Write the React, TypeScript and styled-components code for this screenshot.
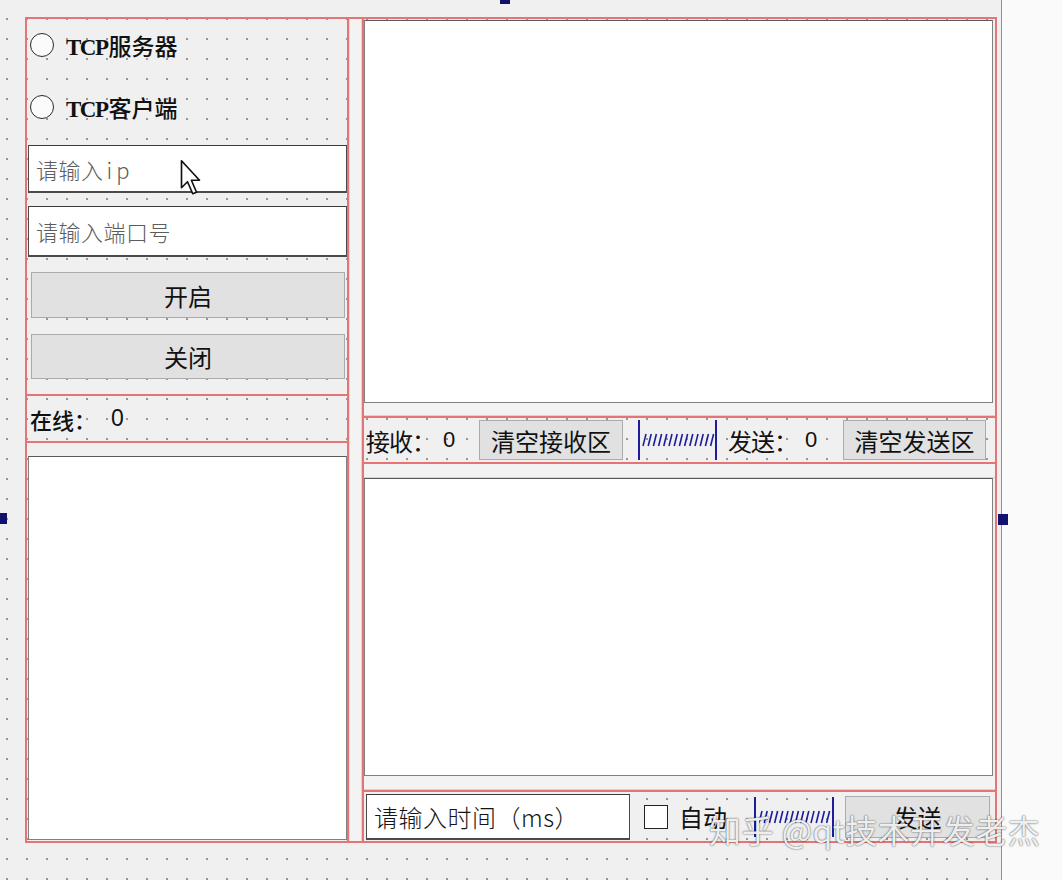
import React from 'react';
import styled, { createGlobalStyle } from 'styled-components';

const cjk = `"Noto Sans CJK SC", "Noto Sans", sans-serif`;
const layoutRed = '#e67474';

const GlobalStyle = createGlobalStyle`
    html, body {
        margin: 0;
        padding: 0;
        width: 1062px;
        height: 880px;
        overflow: hidden;
        background: #fafafa;
        font-family: ${cjk};
    }
`;

const Page = styled.div({
    display: 'flex',
    width: '1062px',
    height: '880px',
    position: 'relative'
});

// the designer form, with its dotted grid
const Form = styled.div({
    width: '1002px',
    height: '880px',
    boxSizing: 'border-box',
    padding: '17px 0 0 25px',
    backgroundColor: '#f0f0f0',
    backgroundImage: 'radial-gradient(circle at center, #979797 0 0.8px, transparent 1.3px)',
    backgroundSize: '20px 20px',
    backgroundPosition: '-3px 9px',
    borderRight: '1px solid #8a90a0'
});

const Outside = styled.div({
    flex: '1',
    background: '#fafafa'
});

const MainFrame = styled.div({
    display: 'flex',
    width: '972px',
    height: '826px',
    boxSizing: 'border-box',
    border: `2px solid ${layoutRed}`
});

const LeftPanel = styled.div({
    width: '322px',
    boxSizing: 'border-box',
    borderRight: `2px solid ${layoutRed}`,
    display: 'flex',
    flexDirection: 'column',
    paddingLeft: '1px'
});

const SplitHandle = styled.div({
    width: '13px',
    boxSizing: 'border-box',
    background: '#f3f3f3',
    borderLeft: '1px solid #dcdcdc',
    borderRight: '1px solid #d8d8d8'
});

const RightPanel = styled.div({
    flex: '1',
    boxSizing: 'border-box',
    borderLeft: `2px solid ${layoutRed}`,
    display: 'flex',
    flexDirection: 'column'
});

const RadioRow = styled.div<{ $top: number }>(p => ({
    height: '52px',
    marginTop: `${p.$top}px`,
    display: 'flex',
    alignItems: 'center',
    gap: '12px',
    paddingLeft: '2px'
}));

const RadioCircle = styled.span({
    width: '24px',
    height: '24px',
    boxSizing: 'border-box',
    borderRadius: '50%',
    border: '1.6px solid #2a2a2a',
    background: '#fbfbfb'
});

const RadioText = styled.span({
    fontFamily: cjk,
    fontSize: '23px',
    fontWeight: 500,
    color: '#111'
});

const Latin = styled.span({
    fontFamily: `"Liberation Serif", serif`,
    fontWeight: 700,
    fontSize: '23px',
    letterSpacing: '-1.5px',
    marginRight: '1px'
});

const LineEdit = styled.div<{ $top: number; $h: number; $w?: number; $dark?: boolean }>(p => ({
    marginTop: `${p.$top}px`,
    height: `${p.$h}px`,
    width: p.$w ? `${p.$w}px` : '319px',
    boxSizing: 'border-box',
    background: '#fff',
    border: '1px solid #4a4a4a',
    borderTopColor: '#3a3a3a',
    borderBottomWidth: '2px',
    display: 'flex',
    alignItems: 'center',
    paddingLeft: '7px',
    fontFamily: cjk,
    fontSize: p.$dark ? '24px' : '22px',
    color: p.$dark ? '#151515' : '#5c5c5c',
    fontWeight: 300,
    letterSpacing: '0.5px',
    flexShrink: 0
}));

const Spaced = styled.span({
    letterSpacing: '4px',
    marginLeft: '3px'
});

const PushButton = styled.div<{ $top?: number; $w?: number; $h?: number }>(p => ({
    marginTop: p.$top !== undefined ? `${p.$top}px` : '0',
    width: p.$w ? `${p.$w}px` : '314px',
    height: p.$h ? `${p.$h}px` : '46px',
    boxSizing: 'border-box',
    background: '#e1e1e1',
    border: '1px solid #ababab',
    display: 'flex',
    alignItems: 'center',
    justifyContent: 'center',
    fontFamily: cjk,
    fontSize: '24px',
    color: '#111',
    flexShrink: 0
}));

const LeftButton = styled(PushButton)({
    marginLeft: '3px'
});

const OnlineRow = styled.div({
    marginTop: '15px',
    marginLeft: '-1px',
    height: '49px',
    boxSizing: 'border-box',
    borderTop: `2px solid ${layoutRed}`,
    borderBottom: `2px solid ${layoutRed}`,
    display: 'flex',
    alignItems: 'center',
    paddingLeft: '3px',
    fontFamily: cjk,
    fontSize: '22px',
    fontWeight: 500,
    color: '#111'
});

const Count = styled.span({
    fontFamily: `"Liberation Sans", sans-serif`,
    fontWeight: 400,
    fontSize: '23px',
    marginLeft: '15px'
});

const WhiteBox = styled.div<{ $h?: number; $top?: number }>(p => ({
    marginTop: p.$top !== undefined ? `${p.$top}px` : '0',
    height: p.$h ? `${p.$h}px` : 'auto',
    flex: p.$h ? 'none' : '1',
    boxSizing: 'border-box',
    background: '#fff',
    border: '1px solid #808080',
    borderTopColor: '#5a5a5a'
}));

const ListBox = styled(WhiteBox)({
    width: '319px',
    marginBottom: '1px'
});

const EditBox = styled(WhiteBox)({
    marginRight: '2px'
});

const HStrip = styled.div<{ $h: number }>(p => ({
    height: `${p.$h}px`,
    flexShrink: 0,
    boxSizing: 'border-box',
    background: '#f3f3f3',
    borderBottom: '1px solid #d6d6d6'
}));

const ToolRow = styled.div<{ $h?: number }>(p => ({
    height: p.$h ? `${p.$h}px` : 'auto',
    flex: p.$h ? 'none' : '1',
    boxSizing: 'border-box',
    borderTop: `2px solid ${layoutRed}`,
    borderBottom: p.$h ? `2px solid ${layoutRed}` : 'none',
    display: 'flex',
    alignItems: 'center',
    paddingLeft: '4px',
    marginRight: '-2px',
    marginLeft: '-2px'
}));

const RowLabel = styled.div<{ $w: number }>(p => ({
    width: `${p.$w}px`,
    flexShrink: 0,
    fontFamily: cjk,
    fontSize: '24px',
    color: '#111',
    letterSpacing: '-1px',
    display: 'flex',
    alignItems: 'center'
}));

const Num = styled.span({
    fontFamily: `"Liberation Sans", sans-serif`,
    fontSize: '22px',
    marginLeft: '8px'
});

const SpringBox = styled.div<{ $w: number; $pad: number }>(p => ({
    width: `${p.$w}px`,
    paddingLeft: `${p.$pad}px`,
    boxSizing: 'border-box',
    flexShrink: 0,
    display: 'flex',
    alignItems: 'center'
}));

const CheckWrap = styled.div({
    width: '120px',
    paddingLeft: '14px',
    boxSizing: 'border-box',
    display: 'flex',
    alignItems: 'center',
    gap: '11px',
    fontFamily: cjk,
    fontSize: '24px',
    color: '#111',
    flexShrink: 0
});

const CheckSquare = styled.span({
    width: '24px',
    height: '24px',
    boxSizing: 'border-box',
    border: '1.6px solid #222',
    background: '#fff'
});

const Handle = styled.div<{ $x: number; $y: number; $w: number; $h: number }>(p => ({
    position: 'absolute',
    left: `${p.$x}px`,
    top: `${p.$y}px`,
    width: `${p.$w}px`,
    height: `${p.$h}px`,
    background: '#12126e'
}));

const Watermark = styled.div({
    position: 'absolute',
    left: '709px',
    top: '806px',
    fontFamily: cjk,
    fontSize: '32px',
    color: 'rgba(255,255,255,0.92)',
    textShadow: '0 0 2px rgba(0,0,0,0.55), 0 0 1px rgba(0,0,0,0.4)',
    whiteSpace: 'nowrap',
    letterSpacing: '0.5px'
});

const CursorIcon = styled.svg({
    position: 'absolute',
    left: '180px',
    top: '159px'
});

function Spring({ width, height }: { width: number; height: number }) {
    const cy = height / 2;
    const coils = [];
    for (let x = 5; x < width - 5; x += 5.2) {
        coils.push(<path key={x} d={`M${x} ${cy + 6} L${x + 3} ${cy - 6}`} />);
    }
    return (
        <svg width={width} height={height} viewBox={`0 0 ${width} ${height}`}>
            <g stroke="#1d1d9c" strokeWidth="2" fill="none">
                <line x1="1" y1="0" x2="1" y2={height} />
                <line x1={width - 1} y1="0" x2={width - 1} y2={height} />
            </g>
            <g stroke="#1d1d9c" strokeWidth="1.6" fill="none">
                {coils}
            </g>
        </svg>
    );
}

export default function App() {
    return (
        <>
            <GlobalStyle />
            <Page>
                <Form>
                    <MainFrame>
                        <LeftPanel>
                            <RadioRow $top={0}>
                                <RadioCircle />
                                <RadioText><Latin>TCP</Latin>服务器</RadioText>
                            </RadioRow>
                            <RadioRow $top={10}>
                                <RadioCircle />
                                <RadioText><Latin>TCP</Latin>客户端</RadioText>
                            </RadioRow>
                            <LineEdit $top={12} $h={48}>请输入<Spaced>ip</Spaced></LineEdit>
                            <LineEdit $top={13} $h={51}>请输入端口号</LineEdit>
                            <LeftButton $top={15} $h={46}>开启</LeftButton>
                            <LeftButton $top={16} $h={45}>关闭</LeftButton>
                            <OnlineRow>在线：<Count>0</Count></OnlineRow>
                            <ListBox $top={13} />
                        </LeftPanel>
                        <SplitHandle />
                        <RightPanel>
                            <EditBox $top={1} $h={383} />
                            <HStrip $h={13} />
                            <ToolRow $h={48}>
                                <RowLabel $w={113}>接收：<Num>0</Num></RowLabel>
                                <PushButton $w={144} $h={40}>清空接收区</PushButton>
                                <SpringBox $w={105} $pad={15}>
                                    <Spring width={79} height={40} />
                                </SpringBox>
                                <RowLabel $w={115}>发送：<Num>0</Num></RowLabel>
                                <PushButton $w={143} $h={40}>清空发送区</PushButton>
                            </ToolRow>
                            <HStrip $h={14} />
                            <EditBox $h={298} />
                            <HStrip $h={14} />
                            <ToolRow>
                                <LineEdit $top={0} $h={46} $w={264} $dark>请输入时间（ms）</LineEdit>
                                <CheckWrap>
                                    <CheckSquare />
                                    自动
                                </CheckWrap>
                                <SpringBox $w={95} $pad={4}>
                                    <Spring width={80} height={40} />
                                </SpringBox>
                                <PushButton $w={145} $h={42}>发送</PushButton>
                            </ToolRow>
                        </RightPanel>
                    </MainFrame>
                </Form>
                <Outside />
                <Handle $x={500} $y={0} $w={10} $h={4} />
                <Handle $x={0} $y={513} $w={7} $h={11} />
                <Handle $x={998} $y={514} $w={10} $h={11} />
                <CursorIcon width="24" height="38" viewBox="0 0 16 25">
                    <path d="M1 1 L1 19 L5 15 L8.5 23 L11 22 L7.6 14 L13 14 Z" fill="#fff" stroke="#111" strokeWidth="1.1" strokeLinejoin="round" />
                </CursorIcon>
                <Watermark>知乎 @qt技术开发老杰</Watermark>
            </Page>
        </>
    );
}
